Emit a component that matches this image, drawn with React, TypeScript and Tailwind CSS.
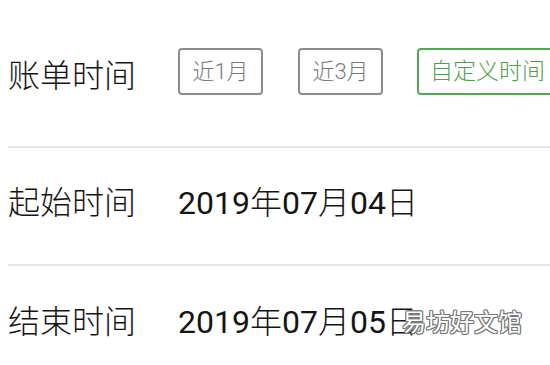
import React from "react";

const font = { fontFamily: 'Roboto, "Noto Sans CJK SC", "Noto Sans", sans-serif' };

function DateText({ d }: { d: string }) {
  return (
    <div className="text-[32px] leading-none">
      <span className="font-normal">2019</span>年<span className="font-normal">07</span>月<span className="font-normal">{d}</span>日
    </div>
  );
}

export default function App() {
  return (
    <div className="relative w-[550px] h-[365px] overflow-hidden bg-white text-[#151515] font-light" style={font}>
      <div className="flex items-center h-[146px] pl-[8px]">
        <div className="w-[170px] shrink-0 text-[32px] leading-none pt-[5px]">账单时间</div>
        <div className="flex items-center shrink-0 -mt-[3px]">
          <div className="w-[85px] h-[47px] flex items-center justify-center border-2 border-[#8c8c8c] rounded-[4px] text-[22px] text-[#7a7a7a] leading-none">近1月</div>
          <div className="ml-[35px] w-[85px] h-[47px] flex items-center justify-center border-2 border-[#8c8c8c] rounded-[4px] text-[22px] text-[#7a7a7a] leading-none">近3月</div>
          <div className="ml-[34px] w-[150px] h-[47px] flex items-center pl-[11px] border-2 border-[#55a755] rounded-[4px] text-[23px] text-[#4f9f4f] leading-none whitespace-nowrap">自定义时间</div>
        </div>
      </div>
      <div className="ml-[8px] h-[2px] bg-[#e6e6e6]" />
      <div className="flex items-center h-[116px] pl-[8px] pb-[6px]">
        <div className="w-[170px] shrink-0 text-[32px] leading-none">起始时间</div>
        <DateText d="04" />
      </div>
      <div className="ml-[8px] h-[2px] bg-[#e6e6e6]" />
      <div className="flex items-center h-[112px] pl-[8px] pb-[1px]">
        <div className="w-[170px] shrink-0 text-[32px] leading-none">结束时间</div>
        <DateText d="05" />
      </div>
      <div
        className="absolute left-[402px] top-[311px] text-[24px] leading-none text-white whitespace-nowrap font-normal"
        style={{ textShadow: "1px 0 #777, -1px 0 #777, 0 1px #777, 0 -1px #777, 1px 1px #777, -1px -1px #777, 1px -1px #777, -1px 1px #777" }}
      >
        易坊好文馆
      </div>
    </div>
  );
}
